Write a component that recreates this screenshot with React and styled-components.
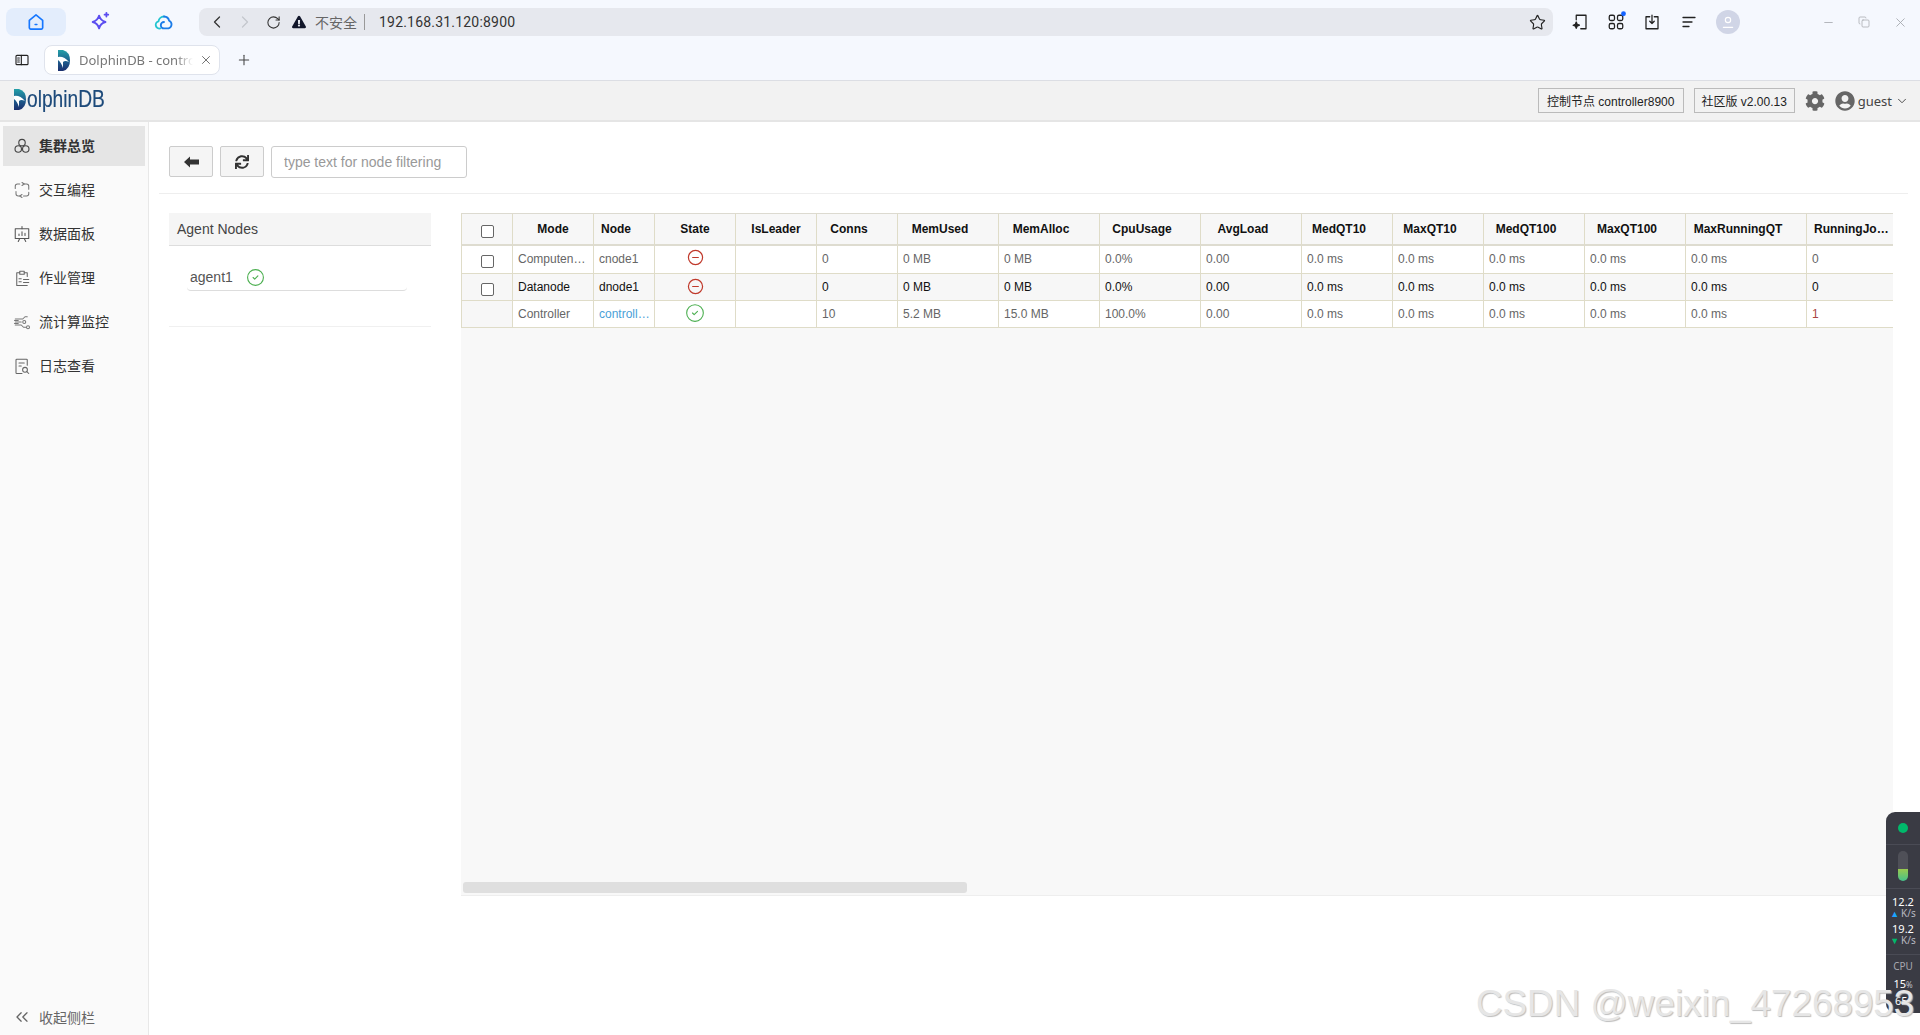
import React from "react";
import styled, { createGlobalStyle } from "styled-components";
import { ChevronLeft, ChevronRight, RotateCw, Plus, X, Minus, Copy, ChevronDown, ChevronsLeft, Star, CircleCheck, CircleMinus } from "lucide-react";
import { FaSync, FaCog, FaUserCircle, FaExclamationTriangle } from "react-icons/fa";

const Global = createGlobalStyle`
  html, body { margin: 0; padding: 0; background: #fff; }
  body { font-family: "Liberation Sans", Arial, "Noto Sans CJK SC", sans-serif; overflow: hidden; }
  * { box-sizing: border-box; }
`;
const Page = styled.div`position: relative; width: 1920px; height: 1035px; display: flex; flex-direction: column; overflow: hidden;`;

/* browser chrome */
const Chrome = styled.div`height: 81px; background: #f5f8fe; border-bottom: 1px solid #dcdee4; flex: none; display: flex; flex-direction: column;`;
const AddressRow = styled.div`display: flex; align-items: center; height: 28px; margin-top: 8px; padding-left: 6px;`;
const HomeBtn = styled.div`width: 60px; height: 28px; border-radius: 8px; background: #e3edfc; display: flex; align-items: center; justify-content: center;`;
const AppIcon = styled.div`width: 64px; height: 28px; display: flex; align-items: center; justify-content: center; margin-left: ${p => p.$ml || 0}px;`;
const AddressBar = styled.div`width: 1354px; margin-left: 3px; height: 28px; border-radius: 8px; background: #e6e8ee; display: flex; align-items: center; color: #222; padding-left: 4px;`;
const NavSlot = styled.div`width: 28px; display: flex; justify-content: center; color: ${p => p.$dim ? "#c4c7cd" : "#333"};`;
const Warn = styled.div`width: 16px; margin-left: 4px; color: #11162a; display: flex; justify-content: center;`;
const Insecure = styled.span`font-size: 14px; margin-left: 8px; color: #666; font-family: "Noto Sans CJK SC", sans-serif; line-height: 20px;`;
const Sep = styled.span`width: 1px; height: 16px; background: #999; margin: 0 14px 0 7px;`;
const Url = styled.span`font-family: Roboto, sans-serif; font-size: 14px; color: #333; letter-spacing: 0.2px;`;
const StarSlot = styled.div`margin-left: auto; margin-right: 7px; display: flex; color: #222;`;
const RightTools = styled.div`display: flex; align-items: center; color: #222; flex: 1;`;
const ToolFlow = styled.div`width: ${p => p.$w}px; margin-left: ${p => p.$ml || 0}px; height: 28px; flex: none; display: flex; align-items: center; justify-content: center; color: ${p => p.$dim ? "#a5a8ae" : "#222"}; svg { overflow: visible; }`;
const Avatar = styled.div`width: 24px; height: 24px; border-radius: 50%; background: #d0d5e6; display: flex; align-items: center; justify-content: center;`;
const TabRow = styled.div`display: flex; align-items: center; height: 30px; margin-top: 9px; padding-left: 14px;`;
const Tab = styled.div`width: 176px; height: 30px; margin-left: 14px; border-radius: 8px; background: #fff; border: 1px solid #dfe3ec; display: flex; align-items: center; padding-left: 13px; color: #777; font-family: "Noto Sans", sans-serif;`;
const TabTitle = styled.span`margin-left: 9px; width: 114px; overflow: hidden; white-space: nowrap; font-size: 13px; -webkit-mask-image: linear-gradient(90deg, #000 85%, transparent);`;
const TabClose = styled.div`margin-left: 6px; display: flex; color: #555;`;
const TabPlus = styled.div`margin-left: 16px; display: flex; color: #444;`;

/* app header */
const AppHeader = styled.header`height: 41px; flex: none; background: #f2f2f2; border-bottom: 2px solid #e5e5e5; display: flex; align-items: center; padding: 0 11px 0 14px;`;
const Logo = styled.div`display: flex; align-items: center; height: 24px; margin-top: -3px;`;
const LogoText = styled.span`font-family: "Liberation Sans", sans-serif; font-size: 24px; color: #1d4a7a; display: inline-block; transform: scaleX(0.8); transform-origin: left center; margin-left: 1px; width: 78px; white-space: nowrap; -webkit-text-stroke: 0.2px #1d4a7a;`;
const HeaderRight = styled.div`margin-left: auto; display: flex; align-items: center;`;
const TagBox = styled.div`height: 25px; border: 1px solid #bbb; padding: 0 4px; display: flex; align-items: center; justify-content: center; font-size: 12px; color: #222; margin-right: ${p => p.$mr}px; width: ${p => p.$w}px; white-space: nowrap;`;
const GearSlot = styled.div`color: #666; display: flex; margin-right: 10px;`;
const UserSlot = styled.div`color: #666; display: flex; margin-right: 3px;`;
const Guest = styled.span`font-size: 13px; color: #444; font-family: "Noto Sans", sans-serif; margin-right: 3px;`;
const ChevSlot = styled.div`display: flex; color: #444;`;

/* main */
const Shell = styled.div`flex: 1; display: flex; min-height: 0;`;
const Sidebar = styled.nav`width: 149px; flex: none; background: #fafafa; border-right: 1px solid #e8e8e8; display: flex; flex-direction: column; padding: 4px 3px 0;`;
const MenuItem = styled.div`height: 40px; margin-bottom: 4px; display: flex; align-items: center; padding-left: 10px; gap: 8px; font-size: 14px; color: #333; background: ${p => p.$active ? "#e5e5e5" : "transparent"}; font-weight: ${p => p.$active ? 700 : 400}; font-family: "Noto Sans CJK SC", sans-serif;`;
const MenuLabel = styled.span`margin-top: -2px;`;
const Collapse = styled.div`margin-top: auto; height: 36px; display: flex; align-items: center; padding-left: 9px; gap: 7px; font-size: 14px; color: #666; font-family: "Noto Sans CJK SC", sans-serif;`;
const Main = styled.main`flex: 1; min-width: 0; padding: 0 12px 0 10px; display: flex; flex-direction: column;`;
const Toolbar = styled.div`flex: none; display: flex; align-items: flex-start; gap: 7px; padding: 24px 0 15px 10px; border-bottom: 1px solid #eee; height: 72px;`;
const ToolBtn = styled.button`width: 44px; height: 31px; border: 1px solid #ccc; border-radius: 2px; background: #f5f5f5; color: #333; display: flex; align-items: center; justify-content: center; padding: 0;`;
const Filter = styled.input`width: 196px; height: 32px; border: 1px solid #ccc; border-radius: 3px; padding: 0 12px; font: 14px "Liberation Sans", sans-serif; background: #fff; &::placeholder { color: #999; opacity: 1; }`;
const Body = styled.div`flex: 1; display: flex; padding: 19px 15px 0 10px; align-items: flex-start; gap: 30px;`;
const AgentPanel = styled.section`width: 262px; height: 114px; flex: none; border-bottom: 1px solid #f0f0f0;`;
const AgentHead = styled.div`height: 33px; background: #f5f5f5; border-bottom: 1px solid #ddd; padding-left: 8px; display: flex; align-items: center; font-size: 14px; color: #444;`;
const AgentRow = styled.div`margin: 14px 0 0 18px; width: 220px; height: 31px; padding-top: 4px; border-bottom: 1px solid #ddd; border-radius: 0 0 4px 4px; display: flex; align-items: center; padding-left: 3px; font-size: 14px; color: #555; gap: 13px;`;
const TableArea = styled.section`width: 1432px; height: 683px; background: #f8f8f8; display: flex; flex-direction: column; border-bottom: 1px solid #eee;`;
const Scroller = styled.div`overflow: hidden; flex: none;`;
const Grid = styled.table`width: 1437px; table-layout: fixed; border-collapse: separate; border-spacing: 0; font-size: 12px; background: #fff;`;
const Col = styled.col`width: ${p => p.$w}px;`;
const Th = styled.th`height: 33px; padding-bottom: 1px; background: #f7f7f7; border-top: 1px solid #dcdad0; border-right: 1px solid #dfdcc8; border-bottom: 2px solid #dedcd0; color: #111; font-weight: 700; text-align: ${p => p.$left ? "left" : "center"}; padding-left: ${p => p.$left ? 7 : 0}px; padding-right: ${p => p.$left ? 7 : p.$sort ? 16 : 0}px; white-space: nowrap; overflow: hidden; text-overflow: ellipsis; &:first-child { border-left: 1px solid #dfdcc8; }`;
const Td = styled.td`height: ${p => p.$h || 27}px; padding: 0 ${p => p.$center ? 0 : 4}px ${p => p.$pb || 0}px ${p => p.$center ? 0 : 5}px; border-right: 1px solid #dfdcc8; border-bottom: 1px solid #dfdcc8; color: ${p => p.$color || (p.$strong ? "#111" : "#666")}; background: ${p => p.$shade ? "#f7f7f7" : "#fff"}; text-align: ${p => p.$center ? "center" : "left"}; white-space: nowrap; overflow: hidden; text-overflow: ellipsis; &:first-child { border-left: 1px solid #dfdcc8; }`;
const Box = styled.input.attrs({ type: "checkbox" })`width: 13px; height: 13px; margin: 4px 0 0; vertical-align: middle; appearance: none; border: 1px solid #666; border-radius: 2px; background: #fff;`;
const StatusWrap = styled.span`display: inline-flex; vertical-align: middle; color: ${p => p.$ok ? "#4caf50" : "#c0392b"}; margin-top: ${p => p.$mt ?? -2}px;`;
const Fill = styled.div`flex: 1;`;
const Track = styled.div`height: 14px; padding: 1px 2px; flex: none;`;
const Thumb = styled.div`width: 504px; height: 11px; background: #dfdfdf; border-radius: 3px;`;

/* overlays */
const Monitor = styled.aside`position: absolute; left: 1886px; top: 812px; width: 34px; height: 201px; background: #3a3b44; border-radius: 9px 0 0 9px; color: #fff; font: 11px "Noto Sans", sans-serif; display: flex; flex-direction: column; align-items: center;`;
const Dot = styled.div`width: 10px; height: 10px; border-radius: 50%; background: #00b96b; margin: 11px 0 11px;`;
const MonSep = styled.div`width: 100%; height: 1px; background: #4a4b55; margin: ${p => p.$m || 0};`;
const Pill = styled.div`width: 10px; height: 30px; border-radius: 5px; background: linear-gradient(#4f5058 60%, #9ac94f 60%, #45c08a); margin: 6px 0 7px;`;
const Speed = styled.div`font-size: 11px; line-height: 13px; margin-top: ${p => p.$mt}px;`;
const Unit = styled.div`font-size: 10px; line-height: 11px; color: #b8b8c0; display: flex; align-items: center; gap: 2px;`;
const Arrow = styled.span`color: ${p => p.$c}; font-size: 9px;`;
const CpuLabel = styled.div`font-size: 10px; color: #a8a8b0; margin-top: 5px; line-height: 12px;`;
const CpuValue = styled.div`font-size: 11px; line-height: 14px; margin-top: ${p => p.$mt}px;`;
const CpuSmall = styled.span`font-size: 8px; color: #c0c0c8;`;
const Watermark = styled.div`position: absolute; left: 1476px; top: 983px; font: 36.8px "Liberation Sans", sans-serif; color: #e6e6e6; text-shadow: 1px 1px 1px #bdbdbd; white-space: nowrap;`;

const Svg = ({ s = 18, c = "currentColor", w = 1.4, children }) => (
  <svg width={s} height={s} viewBox="0 0 24 24" fill="none" stroke={c} strokeWidth={w} strokeLinecap="round" strokeLinejoin="round">{children}</svg>
);
const LogoMark = ({ id, w = 12, h = 21 }) => (
  <svg width={w} height={h} viewBox="0 0 12 21">
    <defs><linearGradient id={id} x1="0" y1="0" x2="0" y2="1"><stop offset="0" stopColor="#23a0a8" /><stop offset="0.55" stopColor="#1d5c8c" /><stop offset="1" stopColor="#1c2f6e" /></linearGradient></defs>
    <path d="M0 0 H5 Q12 2 12 10.5 Q12 19 5 21 H0 Z" fill={`url(#${id})`} />
    <path d="M0 7 Q6 6 11 12 Q7 10 5 12 L5 18 Q3 12 0 10 Z" fill="#fff" />
  </svg>
);
const BackArrow = () => (
  <svg width="15" height="12" viewBox="0 0 15 12"><path d="M0 6 L6 0.5 V3.5 H15 V8.5 H6 V11.5 Z" fill="#333" /></svg>
);
const icons = [
  <Svg c="#444" w={1.5}><circle cx="12" cy="7.5" r="4.3" /><circle cx="7" cy="16" r="4.3" /><circle cx="17" cy="16" r="4.3" /></Svg>,
  <Svg c="#777"><path d="M9 4H6a3 3 0 0 0-3 3v3M15 4h3a3 3 0 0 1 3 3v4M21 15v2a3 3 0 0 1-3 3h-4M9 20H7a3 3 0 0 1-3-3v-3" /><path d="M12 2l3 2-3 2M12 18l-3 2 3 2" /></Svg>,
  <Svg c="#555"><rect x="3" y="5" width="18" height="13" /><path d="M12 2v3M7 22l2-4M17 22l-2-4M8 14v-2M12 14V9M16 14v-3" /></Svg>,
  <Svg c="#666"><path d="M19 10V5h-4M9 5H5v17h14" /><rect x="9" y="3" width="6" height="4" /><path d="M8 13h3M8 17h3M14 14h7M14 18h7" /></Svg>,
  <Svg c="#777"><path d="M3 8h10l3-3h3M3 12h8M3 16h8l3 3h3M2 10h5M2 14h5" /><circle cx="20" cy="19" r="2" /><circle cx="15" cy="12" r="2" /></Svg>,
  <Svg c="#666"><path d="M19 11V4a1 1 0 0 0-1-1H5a1 1 0 0 0-1 1v17a1 1 0 0 0 1 1h7" /><path d="M8 8h7M8 12h3" /><circle cx="16" cy="17" r="3.2" /><path d="M18.5 19.5L21 22" /></Svg>,
];
const menu = ["集群总览", "交互编程", "数据面板", "作业管理", "流计算监控", "日志查看"];
const colWidths = [52, 81, 61, 81, 81, 81, 101, 101, 101, 101, 91, 91, 101, 101, 121, 91];
const heads = [["Mode"], ["Node", 1], ["State"], ["IsLeader"], ["Conns", 1], ["MemUsed", 1], ["MemAlloc", 1], ["CpuUsage", 1], ["AvgLoad", 1], ["MedQT10", 1], ["MaxQT10", 1], ["MedQT100", 1], ["MaxQT100", 1], ["MaxRunningQT", 1]];
const rows = [
  { box: true, h: 28, pb: 2, mode: "Computenode", node: "cnode1", ok: false, v: ["0", "0 MB", "0 MB", "0.0%", "0.00", "0.0 ms", "0.0 ms", "0.0 ms", "0.0 ms", "0.0 ms", "0"] },
  { box: true, shade: true, strong: true, mode: "Datanode", node: "dnode1", ok: false, v: ["0", "0 MB", "0 MB", "0.0%", "0.00", "0.0 ms", "0.0 ms", "0.0 ms", "0.0 ms", "0.0 ms", "0"] },
  { box: false, mode: "Controller", node: "controller8900", link: true, ok: true, v: ["10", "5.2 MB", "15.0 MB", "100.0%", "0.00", "0.0 ms", "0.0 ms", "0.0 ms", "0.0 ms", "0.0 ms", "1"], red: true },
];

export default function App() {
  return (
    <Page>
      <Global />
      <Chrome>
        <AddressRow>
          <HomeBtn><Svg s={20} c="#1677ff" w={2}><path d="M4 10l8-6.5L20 10v9a1.5 1.5 0 0 1-1.5 1.5h-13A1.5 1.5 0 0 1 4 19z" /><path d="M11 15h2" /></Svg></HomeBtn>
          <AppIcon $ml={2}><Svg s={22} c="#5b4df0" w={2}><path d="M11 5c1 4 3 6 7 7-4 1-6 3-7 7-1-4-3-6-7-7 4-1 6-3 7-7z" /><path d="M19 2v4M17 4h4" /></Svg></AppIcon>
          <AppIcon><Svg s={22} w={2}><path d="M8 19a4 4 0 0 1-2-7.8A6 6 0 0 1 12 6" stroke="#22c4d0" /><path d="M12 6a6 6 0 0 1 5.6 4.6A4.5 4.5 0 0 1 17 19H12a3.5 3.5 0 0 1 0-7" stroke="#1c7ce8" /></Svg></AppIcon>
          <AddressBar>
            <NavSlot><ChevronLeft size={20} strokeWidth={1.5} /></NavSlot>
            <NavSlot $dim><ChevronRight size={20} strokeWidth={1.5} /></NavSlot>
            <NavSlot><RotateCw size={15} strokeWidth={1.7} /></NavSlot>
            <Warn><FaExclamationTriangle size={14} /></Warn>
            <Insecure>不安全</Insecure>
            <Sep />
            <Url>192.168.31.120:8900</Url>
            <StarSlot><Star size={17} strokeWidth={1.6} /></StarSlot>
          </AddressBar>
          <RightTools>
            <ToolFlow $w={54}><Svg s={18} w={1.7}><path d="M7 3h13v18h-7M7 3v6" /><path d="M7 12l1.2 3 3 1.2-3 1.2L7 20.5l-1.2-3-3-1.2 3-1.2z" fill="currentColor" /></Svg></ToolFlow>
            <ToolFlow $w={18}><Svg s={18} w={1.7}><rect x="3" y="3" width="7" height="7" rx="2" /><rect x="14" y="3" width="7" height="7" rx="2" /><rect x="3" y="14" width="7" height="7" rx="2" /><rect x="14" y="14" width="7" height="7" rx="2" /><circle cx="22" cy="1" r="3.2" fill="#1463ff" stroke="none" /></Svg></ToolFlow>
            <ToolFlow $w={53}><Svg s={18} w={1.7}><path d="M9 5H4v16h16V5h-5M12 3v11M9 11l3 3 3-3" /></Svg></ToolFlow>
            <ToolFlow $w={21}><Svg s={18} w={1.7}><path d="M4 6h16M4 12h12M4 18h8" /></Svg></ToolFlow>
            <ToolFlow $w={58}><Avatar><Svg s={16} c="#fff" w={1.7}><circle cx="12" cy="9" r="4" /><path d="M5 20h14" /></Svg></Avatar></ToolFlow>
            <ToolFlow $w={36} $ml={53} $dim><Minus size={13} strokeWidth={1.5} /></ToolFlow>
            <ToolFlow $w={36} $dim><Copy size={12} strokeWidth={1.5} /></ToolFlow>
            <ToolFlow $w={36} $dim><X size={15} strokeWidth={1.4} /></ToolFlow>
          </RightTools>
        </AddressRow>
        <TabRow>
          <Svg s={16} c="#222" w={1.7}><rect x="3" y="5" width="18" height="14" rx="1.5" /><path d="M11 5v14M5.5 9H8M5.5 12H8M5.5 15H8" /></Svg>
          <Tab>
            <LogoMark id="fav" />
            <TabTitle>DolphinDB - controller8900</TabTitle>
            <TabClose><X size={14} strokeWidth={1.4} /></TabClose>
          </Tab>
          <TabPlus><Plus size={16} strokeWidth={1.6} /></TabPlus>
        </TabRow>
      </Chrome>
      <AppHeader>
        <Logo><LogoMark id="brand" /><LogoText>olphinDB</LogoText></Logo>
        <HeaderRight>
          <TagBox $w={146} $mr={10}>控制节点 controller8900</TagBox>
          <TagBox $w={101} $mr={10}>社区版 v2.00.13</TagBox>
          <GearSlot><FaCog size={20} /></GearSlot>
          <UserSlot><FaUserCircle size={20} /></UserSlot>
          <Guest>guest</Guest>
          <ChevSlot><ChevronDown size={14} strokeWidth={1.6} /></ChevSlot>
        </HeaderRight>
      </AppHeader>
      <Shell>
        <Sidebar>
          {menu.map((m, i) => <MenuItem key={m} $active={i === 0}>{icons[i]}<MenuLabel>{m}</MenuLabel></MenuItem>)}
          <Collapse><ChevronsLeft size={20} strokeWidth={1.6} /><span>收起侧栏</span></Collapse>
        </Sidebar>
        <Main>
          <Toolbar>
            <ToolBtn><BackArrow /></ToolBtn>
            <ToolBtn><FaSync size={14} /></ToolBtn>
            <Filter placeholder="type text for node filtering" />
          </Toolbar>
          <Body>
            <AgentPanel>
              <AgentHead>Agent Nodes</AgentHead>
              <AgentRow>agent1<StatusWrap $ok $mt={1}><CircleCheck size={19} strokeWidth={1.4} /></StatusWrap></AgentRow>
            </AgentPanel>
            <TableArea>
              <Scroller>
                <Grid>
                  <colgroup>{colWidths.map((w, i) => <Col key={i} $w={w} />)}</colgroup>
                  <thead>
                    <tr>
                      <Th><Box /></Th>
                      {heads.map(([h, s]) => <Th key={h} $sort={!!s}>{h}</Th>)}
                      <Th $left>RunningJobs</Th>
                    </tr>
                  </thead>
                  <tbody>
                    {rows.map(r => (
                      <tr key={r.node}>
                        <Td $h={r.h} $center $shade={!r.box || r.shade}>{r.box && <Box />}</Td>
                        <Td $h={r.h} $pb={r.pb} $shade={r.shade} $strong={r.strong}>{r.mode}</Td>
                        <Td $h={r.h} $pb={r.pb} $shade={r.shade} $strong={r.strong} $color={r.link ? "#4a9fd8" : undefined}>{r.node}</Td>
                        <Td $h={r.h} $pb={r.pb} $shade={r.shade} $center><StatusWrap $ok={r.ok}>{r.ok ? <CircleCheck size={20} strokeWidth={1.3} /> : <CircleMinus size={17} strokeWidth={1.7} />}</StatusWrap></Td>
                        <Td $h={r.h} $pb={r.pb} $shade={r.shade} />
                        {r.v.map((x, i) => (
                          <Td key={i} $h={r.h} $pb={r.pb} $shade={r.shade} $strong={r.strong} $color={r.red && i === r.v.length - 1 ? "#a94442" : undefined}>{x}</Td>
                        ))}
                      </tr>
                    ))}
                  </tbody>
                </Grid>
              </Scroller>
              <Fill />
              <Track><Thumb /></Track>
            </TableArea>
          </Body>
        </Main>
      </Shell>
      <Monitor>
        <Dot />
        <MonSep />
        <Pill />
        <MonSep />
        <Speed $mt={6}>12.2</Speed>
        <Unit><Arrow $c="#1aa3ff">▲</Arrow>K/s</Unit>
        <Speed $mt={3}>19.2</Speed>
        <Unit><Arrow $c="#00b96b">▼</Arrow>K/s</Unit>
        <MonSep $m="8px 0 0" />
        <CpuLabel>CPU</CpuLabel>
        <CpuValue $mt={5}>15<CpuSmall>%</CpuSmall></CpuValue>
        <CpuValue $mt={2}>65<CpuSmall>°</CpuSmall></CpuValue>
      </Monitor>
      <Watermark>CSDN @weixin_47268953</Watermark>
    </Page>
  );
}
